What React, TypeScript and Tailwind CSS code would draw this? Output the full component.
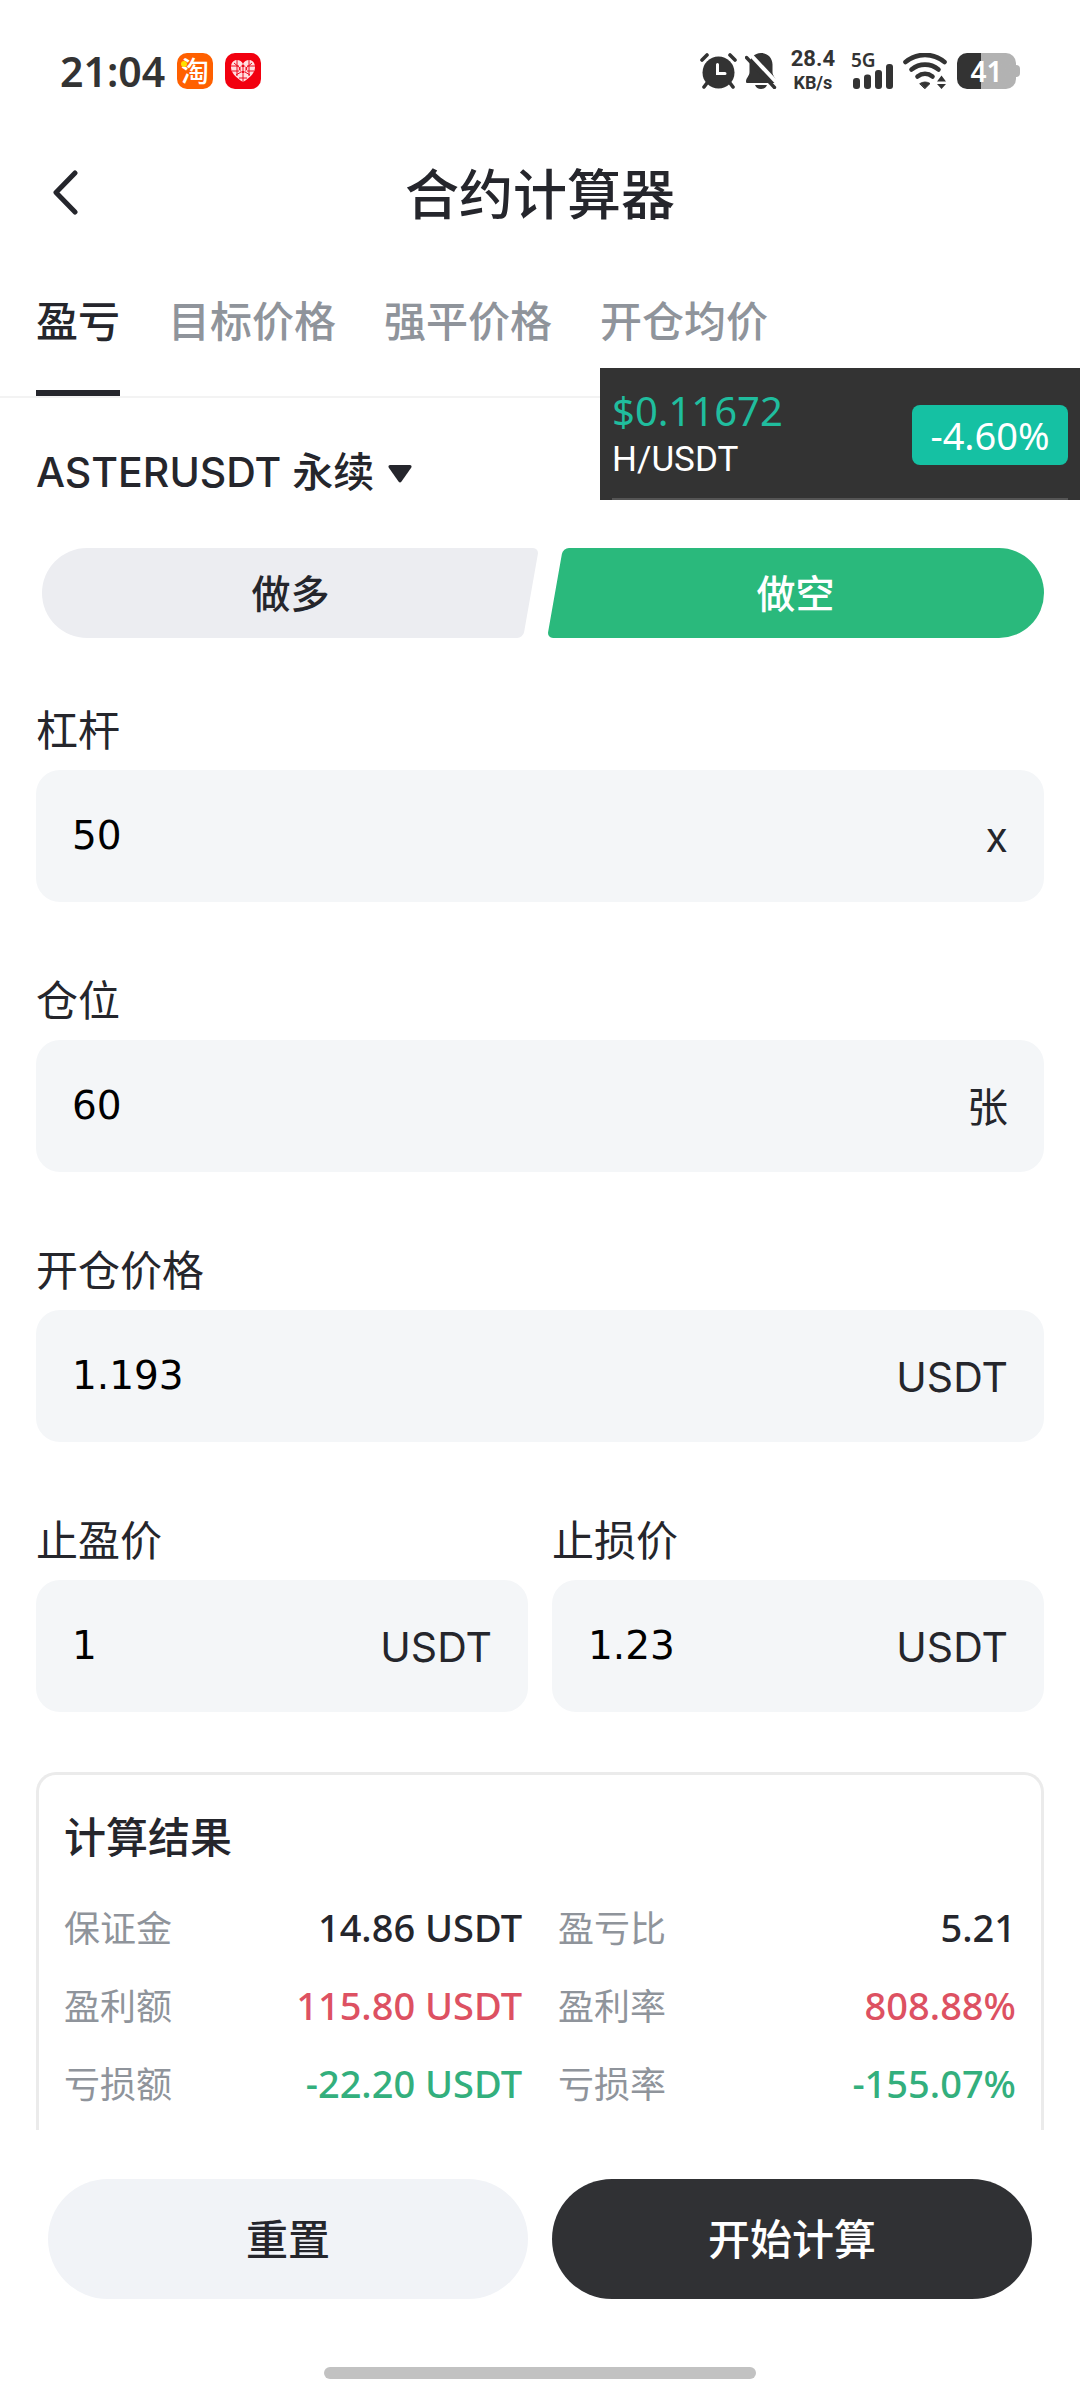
import React, { useState } from 'react';

const tabs = ['盈亏', '目标价格', '强平价格', '开仓均价'];

const results = [
  { label: '保证金', value: '14.86 USDT', color: 'text-[#25262c]' },
  { label: '盈亏比', value: '5.21', color: 'text-[#25262c]' },
  { label: '盈利额', value: '115.80 USDT', color: 'text-[#dd5162]' },
  { label: '盈利率', value: '808.88%', color: 'text-[#dd5162]' },
  { label: '亏损额', value: '-22.20 USDT', color: 'text-[#33af7d]' },
  { label: '亏损率', value: '-155.07%', color: 'text-[#33af7d]' },
];

const AlarmIcon: React.FC = () => (
  <svg className="h-9 w-[37px]" viewBox="0 0 37 36" fill="#333" stroke="#333" strokeLinecap="round">
    <circle cx="18.5" cy="19.5" r="16" stroke="none" />
    <path d="M2 7 7 2M35 7 30 2M7 30 4 34M30 30 33 34" strokeWidth="3.6" fill="none" />
    <path d="M17.5 11.5V20.5H25" stroke="#fff" strokeWidth="3" fill="none" />
  </svg>
);

const MutedIcon: React.FC = () => (
  <svg className="h-9 w-8" viewBox="0 0 32 36" fill="#333">
    <path d="M16 0C22.5 0 27.5 5 27.5 11.5V19C27.5 23 31 25 31 28.5 31 29.5 30.5 30 29.5 30H2.5C1.5 30 1 29.5 1 28.5 1 25 4.5 23 4.5 19V11.5C4.5 5 9.5 0 16 0Z" />
    <path d="M10 32H22C21 34.5 19 36 16 36S11 34.5 10 32Z" />
    <path d="M3-1 33 31" stroke="#fff" strokeWidth="4" />
    <path d="M1.5 4.5 29.5 34.5" stroke="#333" strokeWidth="3.4" strokeLinecap="round" />
  </svg>
);

const SignalIcon: React.FC = () => (
  <svg className="h-[25px] w-10" viewBox="0 0 40 25" fill="#333">
    <rect x="0" y="14" width="7" height="11" rx="3" />
    <rect x="11" y="10.5" width="7" height="14.5" rx="3" />
    <rect x="22" y="6" width="7" height="19" rx="3" />
    <rect x="33" y="0" width="7" height="25" rx="3" />
  </svg>
);

const WifiIcon: React.FC = () => (
  <svg className="h-9 w-11" viewBox="0 0 44 36" fill="none" stroke="#333" strokeLinecap="round">
    <path d="M2.5 9C14-.5 30-.5 41.5 9" strokeWidth="4.6" />
    <path d="M8.5 16.5C16.5 10 27.5 10 35.5 16.5" strokeWidth="4.6" />
    <path d="M14.5 23.5C19 20 25 20 29.5 23.5" strokeWidth="4.6" />
    <path d="M17 30.5Q22 27.5 27 30.5L22 35.5Z" fill="#333" strokeWidth="1" />
    <path d="M34 28.5 38.5 22.5 43 28.5ZM34 31 38.5 36 43 31Z" fill="#333" stroke="none" />
  </svg>
);

const Battery: React.FC = () => (
  <div className="flex items-center">
    <div className="flex h-9 w-[59px] items-center justify-center rounded-[10px] bg-linear-to-r from-[#333] from-40% to-[#b2b2b2] to-40% text-[28px] font-semibold text-white">
      41
    </div>
    <div className="h-3 w-1 rounded-r-sm bg-[#b2b2b2]" />
  </div>
);

const HeartIcon: React.FC = () => (
  <svg className="size-7" viewBox="0 0 28 28">
    <path d="M14 25C6 20 2 15.5 2 10 2 5.5 5 3 8 3 10.5 3 13 4.5 14 7 15 4.5 17.5 3 20 3 23 3 26 5.5 26 10 26 15.5 22 20 14 25Z" fill="#ffdfe0" />
    <path d="M8 3V19M20 3V19M2 9H10M18 9H26M3 14H10M18 14H25M5 6 11 11M23 6 17 11M7 18 12 15M21 18 16 15M14 17V25M10 21H18" stroke="#ee0a1c" strokeWidth="1" />
    <path d="M14 7 18.5 12 14 17 9.5 12Z" fill="#ee0a1c" />
    <path d="M12.5 9.5V14.5M15.5 9.5V14.5M11 11H17M11 13H17" stroke="#ffdfe0" strokeWidth="1" />
  </svg>
);

const StatusBar: React.FC = () => (
  <div className="flex h-[142px] items-center justify-between px-15 text-[#333]">
    <div className="flex items-center gap-3">
      <span className="text-[41px] leading-none font-semibold">21:04</span>
      <span className="relative flex size-9 items-center justify-center rounded-[10px] bg-[#ff6000] text-[28px] leading-none font-medium text-white">
        淘
        <span className="absolute top-2 left-1 size-1.5 rounded-full bg-[#ffe000]" />
      </span>
      <span className="flex size-9 items-center justify-center rounded-[10px] bg-[#f2000f]">
        <HeartIcon />
      </span>
    </div>
    <div className="flex items-center">
      <AlarmIcon />
      <div className="ml-2">
        <MutedIcon />
      </div>
      <div className="ml-3.5 flex flex-col items-center font-[Roboto,sans-serif] leading-[24px] font-bold">
        <span className="text-[22px]">28.4</span>
        <span className="text-[18px]">KB/s</span>
      </div>
      <div className="relative ml-4 flex h-9 w-11 items-end pl-0.5">
        <span className="absolute -top-1 left-0 text-[19px] leading-[22px] font-semibold">5G</span>
        <SignalIcon />
      </div>
      <div className="mr-2.5 ml-2">
        <WifiIcon />
      </div>
      <Battery />
    </div>
  </div>
);

const Ticker: React.FC = () => (
  <aside className="absolute top-[368px] right-0 flex h-[132px] w-[480px] flex-col bg-[#333] px-3">
    <div className="flex flex-1 items-center justify-between pt-1">
      <div>
        <div className="text-[40px] leading-[50px] text-[#20bd9e]">$0.11672</div>
        <div className="font-[Roboto,sans-serif] text-[35px] leading-[48px] text-white">H/USDT</div>
      </div>
      <div className="flex h-15 w-[156px] items-center justify-center rounded-lg bg-[#15c1a3] text-[38px] leading-none text-white">
        -4.60%
      </div>
    </div>
    <div className="h-0.5 bg-[#555]" />
  </aside>
);

type FieldProps = { id: string; label: string; unit: string; initial: string };

const Field: React.FC<FieldProps> = ({ id, label, unit, initial }) => {
  const [value, setValue] = useState(initial);
  return (
    <div className="min-w-0 flex-1">
      <label htmlFor={id} className="mb-2.5 block text-[42px] leading-[60px]">
        {label}
      </label>
      <div className="flex h-[132px] items-center rounded-3xl bg-[#f4f6f8] px-9">
        <input
          id={id}
          inputMode="decimal"
          value={value}
          onChange={(e) => setValue(e.target.value)}
          className="min-w-0 flex-1 bg-transparent font-['DejaVu_Sans',sans-serif] text-[39px] leading-[60px] text-black outline-none"
        />
        <span className="pt-0.5 font-[Inter,'Noto_Sans_CJK_SC',sans-serif] text-[41px] leading-[60px]">{unit}</span>
      </div>
    </div>
  );
};

const App: React.FC = () => {
  const [tab, setTab] = useState(tabs[0]);

  return (
    <div className="relative flex min-h-screen flex-col bg-white font-['Noto_Sans','Noto_Sans_CJK_SC',sans-serif] text-[#25262c]">
      <StatusBar />

      <header className="grid h-[104px] grid-cols-[1fr_auto_1fr] items-center px-12">
        <button aria-label="返回" className="w-9">
          <svg className="h-12 w-9" viewBox="0 0 36 48" fill="none" stroke="#25262c" strokeWidth="5" strokeLinecap="round" strokeLinejoin="round">
            <path d="M27 3 8 22.5 27 42" />
          </svg>
        </button>
        <h1 className="text-[54px] leading-none font-medium">合约计算器</h1>
      </header>

      <nav className="flex h-[152px] gap-12 border-b-2 border-[#f3f3f3] px-9">
        {tabs.map((name) => (
          <button
            key={name}
            onClick={() => setTab(name)}
            className={
              name === tab
                ? 'border-b-6 border-[#25262c] pt-1 text-[42px] font-medium whitespace-nowrap'
                : 'pb-0.5 text-[42px] font-medium whitespace-nowrap text-[#8f949b]'
            }
          >
            {name}
          </button>
        ))}
      </nav>

      <Ticker />

      <main className="flex flex-1 flex-col px-9 pt-11">
        <div className="flex items-center gap-3.5">
          <select
            aria-label="合约"
            className="appearance-none bg-transparent font-[Inter,'Noto_Sans_CJK_SC',sans-serif] text-[41px] leading-[60px] font-medium [field-sizing:content]"
          >
            <option>ASTERUSDT 永续</option>
          </select>
          <svg className="mt-1 h-[18px] w-6" viewBox="0 0 24 18" fill="#25262c">
            <path d="M2 0H22Q24.5.5 23 3L13.5 16.5Q12 18.5 10.5 16.5L1 3Q-.5.5 2 0Z" />
          </svg>
        </div>

        <div className="mt-[46px] ml-1.5 flex gap-2 text-[39px] font-medium">
          <button className="relative isolate h-[90px] flex-1 overflow-hidden rounded-l-full before:absolute before:inset-y-0 before:right-2 before:-left-5 before:-z-10 before:-skew-x-10 before:rounded-r-md before:bg-[#ecedf1]">
            做多
          </button>
          <button className="relative isolate h-[90px] flex-1 overflow-hidden rounded-r-full text-white before:absolute before:inset-y-0 before:-right-5 before:left-2 before:-z-10 before:-skew-x-10 before:rounded-l-md before:bg-[#2ab97c]">
            做空
          </button>
        </div>

        <form className="mt-[62px] flex flex-col gap-[68px]">
          <Field id="leverage" label="杠杆" unit="x" initial="50" />
          <Field id="size" label="仓位" unit="张" initial="60" />
          <Field id="entry" label="开仓价格" unit="USDT" initial="1.193" />
          <div className="flex gap-6">
            <Field id="take-profit" label="止盈价" unit="USDT" initial="1" />
            <Field id="stop-loss" label="止损价" unit="USDT" initial="1.23" />
          </div>
        </form>

        <section className="mt-15 flex-1 rounded-t-[20px] border-[3px] border-b-0 border-[#ebebeb] px-[25px] pt-8 pb-[7px]">
          <h2 className="text-[42px] leading-[60px] font-medium">计算结果</h2>
          <dl className="mt-[22px] grid grid-cols-2 gap-x-9">
            {results.map((item) => (
              <div key={item.label} className="flex h-[78px] items-center justify-between">
                <dt className="pt-0.5 text-[36px] text-[#8f949b]">{item.label}</dt>
                <dd className={`pb-0.5 text-[38px] font-medium ${item.color}`}>{item.value}</dd>
              </div>
            ))}
          </dl>
        </section>
      </main>

      <footer className="px-12 pt-[49px] pb-[21px]">
        <div className="flex gap-6 text-[42px] font-medium">
          <button className="h-[120px] flex-1 rounded-full bg-[#f1f3f7] pb-0.5">重置</button>
          <button className="h-[120px] flex-1 rounded-full bg-[#303134] pb-0.5 text-white">开始计算</button>
        </div>
        <div className="mx-auto mt-[68px] h-3 w-[432px] rounded-full bg-[#c2c2c2]" />
      </footer>
    </div>
  );
};

export default App;
